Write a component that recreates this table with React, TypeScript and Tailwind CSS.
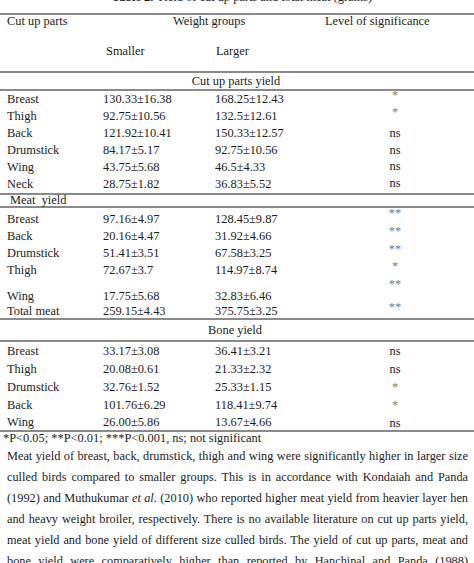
import React from "react";

type Row = { part: string; small: string; large: string; sig: string; h?: string; sigShift?: string };

const cutUp: Row[] = [
  { part: "Breast", small: "130.33±16.38", large: "168.25±12.43", sig: "*", sigShift: "-translate-y-[4px]" },
  { part: "Thigh", small: "92.75±10.56", large: "132.5±12.61", sig: "*", sigShift: "-translate-y-[4px]" },
  { part: "Back", small: "121.92±10.41", large: "150.33±12.57", sig: "ns" },
  { part: "Drumstick", small: "84.17±5.17", large: "92.75±10.56", sig: "ns" },
  { part: "Wing", small: "43.75±5.68", large: "46.5±4.33", sig: "ns", sigShift: "-translate-y-[1px]" },
  { part: "Neck", small: "28.75±1.82", large: "36.83±5.52", sig: "ns", sigShift: "-translate-y-[1px]" },
];

const bone: Row[] = [
  { part: "Breast", small: "33.17±3.08", large: "36.41±3.21", sig: "ns" },
  { part: "Thigh", small: "20.08±0.61", large: "21.33±2.32", sig: "ns" },
  { part: "Drumstick", small: "32.76±1.52", large: "25.33±1.15", sig: "*" },
  { part: "Back", small: "101.76±6.29", large: "118.41±9.74", sig: "*" },
  { part: "Wing", small: "26.00±5.86", large: "13.67±4.66", sig: "ns", h: "h-[16px]", sigShift: "translate-y-[1px]" },
];

function Line() {
  return <div className="h-[2px] bg-[#8a8a8a]" />;
}

function DataRow({ r, h = "h-[17px]" }: { r: Row; h?: string }) {
  const star = r.sig.includes("*");
  return (
    <div className={`grid grid-cols-[96px_112px_140px_80px] items-center pl-[7px] ${r.h ?? h}`}>
      <span>{r.part}</span>
      <span>{r.small}</span>
      <span>{r.large}</span>
      <span className={`text-center ${star ? "text-[#7a7a7a]" : ""} ${r.sigShift ?? ""}`}>{r.sig}</span>
    </div>
  );
}

const para = [
  "Meat yield of breast, back, drumstick, thigh and wing were significantly higher in larger size",
  "culled birds compared to smaller groups. This is in accordance with Kondaiah and Panda",
  null,
  "and heavy weight broiler, respectively. There is no available literature on cut up parts yield,",
  "meat yield and bone yield of different size culled birds. The yield of cut up parts, meat and",
  "bone yield were comparatively higher than reported by Hanchinal and Panda (1988)",
];

export default function App() {
  return (
    <div className="w-[474px] h-[563px] overflow-hidden bg-white text-[#1c1c1c] text-[12.4px] leading-[13px] font-['Liberation_Serif',serif]">
      <div className="h-[13px] flex items-end justify-center pb-[9px] pl-[10px]">
        <span className="whitespace-nowrap">
          <b>Table 2.</b> Yield of cut up parts and total meat (grams)
        </span>
      </div>
      <Line />
      <div className="grid grid-cols-[166px_152px_auto] pl-[7px] h-[13px] items-center">
        <span>Cut up parts</span>
        <span>Weight groups</span>
        <span>Level of significance</span>
      </div>
      <div className="h-[16px]" />
      <div className="grid grid-cols-[96px_112px_auto] pl-[7px] h-[14px] items-center">
        <span />
        <span className="pl-[3px]">Smaller</span>
        <span className="pl-[1px]">Larger</span>
      </div>
      <div className="h-[13px]" />
      <Line />
      <div className="h-[16px] flex items-center justify-center pr-[2px]">Cut up parts yield</div>
      <Line />
      {cutUp.map((r) => (
        <DataRow key={r.part} r={r} />
      ))}
      <Line />
      <div className="h-[11px] flex items-center pl-[10px]">Meat&nbsp; yield</div>
      <Line />
      <div className="h-[3px]" />
      <DataRow r={{ part: "Breast", small: "97.16±4.97", large: "128.45±9.87", sig: "**", sigShift: "-translate-y-[6px]" }} />
      <DataRow r={{ part: "Back", small: "20.16±4.47", large: "31.92±4.66", sig: "**", sigShift: "-translate-y-[5px]" }} />
      <DataRow r={{ part: "Drumstick", small: "51.41±3.51", large: "67.58±3.25", sig: "**", sigShift: "-translate-y-[4px]" }} />
      <DataRow r={{ part: "Thigh", small: "72.67±3.7", large: "114.97±8.74", sig: "*", sigShift: "-translate-y-[4px]" }} />
      <div className="grid grid-cols-[96px_112px_140px_80px] pl-[7px] h-[9px] items-center">
        <span />
        <span />
        <span />
        <span className="text-center text-[#7a7a7a] -translate-y-[1px]">**</span>
      </div>
      <DataRow r={{ part: "Wing", small: "17.75±5.68", large: "32.83±6.46", sig: "" }} />
      <DataRow r={{ part: "Total meat", small: "259.15±4.43", large: "375.75±3.25", sig: "**", h: "h-[13px]", sigShift: "-translate-y-[4px]" }} />
      <Line />
      <div className="h-[20px] flex items-center justify-center pr-[4px]">Bone yield</div>
      <Line />
      {bone.map((r) => (
        <DataRow key={r.part} r={r} h="h-[18px]" />
      ))}
      <Line />
      <div className="h-[12px] flex items-center pl-[3px]">*P&lt;0.05; **P&lt;0.01; ***P&lt;0.001, ns; not significant</div>
      <div className="pt-[2px] pl-[7px] pr-[6px] leading-[21px] text-[12.3px]">
        {para.map((t, i) =>
          t === null ? (
            <div key={i} className="text-justify [text-align-last:justify] whitespace-nowrap">
              (1992) and Muthukumar <i>et al</i>. (2010) who reported higher meat yield from heavier layer hen
            </div>
          ) : (
            <div key={i} className="text-justify [text-align-last:justify] whitespace-nowrap">
              {t}
            </div>
          )
        )}
      </div>
    </div>
  );
}
